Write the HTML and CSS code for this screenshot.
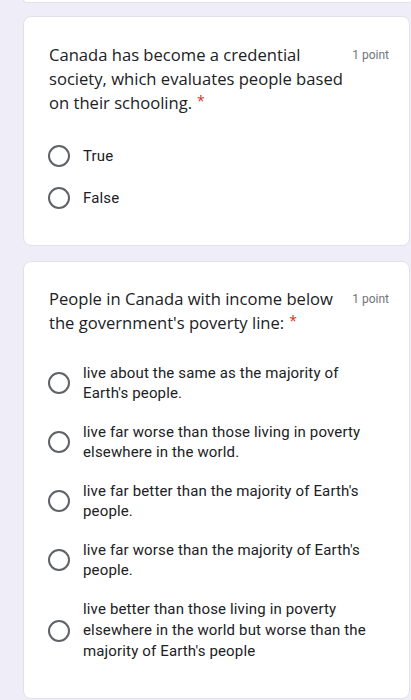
FILE: index.html
```
<!DOCTYPE html>
<html>
<head>
<meta charset="utf-8">
<link rel="stylesheet" href="styles.css">
</head>
<body>
<div class="prev-card"></div>
<div class="card card-1">
  <div class="q-head">
    <div class="q-title">Canada has become a credential society, which evaluates people based on their schooling.<span class="req">*</span></div>
    <div class="q-points">1 point</div>
  </div>
  <div class="options opts-short">
    <div class="opt"><span class="radio"></span><span class="opt-text">True</span></div>
    <div class="opt"><span class="radio"></span><span class="opt-text">False</span></div>
  </div>
</div>
<div class="card card-2">
  <div class="q-head">
    <div class="q-title">People in Canada with income below the government's poverty line:<span class="req">*</span></div>
    <div class="q-points">1 point</div>
  </div>
  <div class="options opts-long">
    <div class="opt"><span class="radio"></span><span class="opt-text">live about the same as the majority of Earth's people.</span></div>
    <div class="opt"><span class="radio"></span><span class="opt-text">live far worse than those living in poverty elsewhere in the world.</span></div>
    <div class="opt"><span class="radio"></span><span class="opt-text">live far better than the majority of Earth's people.</span></div>
    <div class="opt"><span class="radio"></span><span class="opt-text">live far worse than the majority of Earth's people.</span></div>
    <div class="opt"><span class="radio"></span><span class="opt-text opt-text-tall">live better than those living in poverty elsewhere in the world but worse than the majority of Earth's people</span></div>
  </div>
</div>
</body>
</html>
```
FILE: styles.css
```
html, body {
  margin: 0;
  padding: 0;
}
body {
  background: #efeef8;
  font-family: Roboto, "Liberation Sans", sans-serif;
  color: #202124;
  height: 700px;
  overflow: hidden;
}
.prev-card {
  margin-left: 23px;
  height: 2px;
  background: #fff;
  border-radius: 0 0 8px 8px;
  border-bottom: 1px solid #e2e1ea;
  border-left: 1px solid #e2e1ea;
}
.card {
  margin-left: 23px;
  width: 387px;
  background: #fff;
  border: 1px solid #e2e1ea;
  border-radius: 8px;
  box-sizing: border-box;
  padding: 0 20px 0 24px;
}
.card-1 {
  margin-top: 13px;
  height: 230px;
  padding-top: 26px;
}
.card-2 {
  margin-top: 15px;
  height: 438px;
  padding-top: 25px;
}
.q-head {
  display: flex;
  align-items: flex-start;
  padding-left: 1px;
}
.q-title {
  flex: 1;
  font-family: "Open Sans", Roboto, sans-serif;
  font-size: 16.6px;
  line-height: 24px;
  color: #202124;
  padding-right: 8px;
}
.req {
  color: #d93025;
  font-size: 14px;
  margin-left: 5px;
  vertical-align: top;
  line-height: 20px;
}
.q-points {
  font-size: 12px;
  line-height: 24px;
  color: #70757a;
  white-space: nowrap;
}
.options {
  display: flex;
  flex-direction: column;
}
.opts-short {
  margin-top: 30px;
  gap: 20px;
}
.opts-long {
  margin-top: 28px;
  gap: 19px;
}
.opt {
  display: flex;
  align-items: center;
}
.radio {
  flex: none;
  width: 22px;
  height: 22px;
  border: 2px solid #5f6368;
  border-radius: 50%;
  box-sizing: border-box;
  margin-right: 13px;
}
.opt-text {
  font-size: 15px;
  line-height: 20px;
  letter-spacing: 0.15px;
  max-width: 292px;
  color: #202124;
}
.opt-text-tall {
  line-height: 21px;
}
```
